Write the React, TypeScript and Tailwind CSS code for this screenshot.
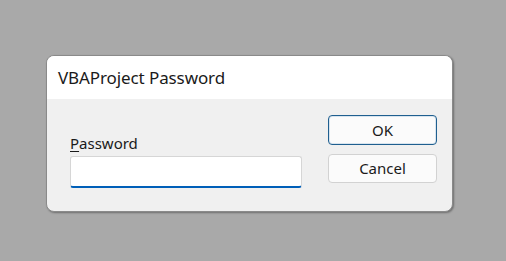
export default function App() {
  return (
    <div
      className="w-[506px] h-[261px] bg-[#a9a9a9] pt-[55px] pl-[46px]"
      style={{ fontFamily: '"Noto Sans", "Open Sans", sans-serif' }}
    >
      <div className="w-[407px] h-[157px] rounded-[8px] border border-[#8a8a8a] bg-[#f0f0f0] overflow-hidden shadow-[1px_1px_2px_rgba(0,0,0,0.35)] flex flex-col">
        {/* Title bar */}
        <div className="h-[43px] bg-white flex items-center pl-[11px] text-[17px] text-[#1a1a1a] tracking-[-0.1px]">
          VBAProject Password
        </div>

        {/* Body */}
        <div className="flex flex-1 pl-[23px] pr-[15px] pt-[16px]">
          <div className="flex-1 flex flex-col pt-[18px]">
            <label className="text-[15px] text-[#1a1a1a] leading-[20px]">
              <span className="underline underline-offset-[2px]">P</span>assword
            </label>
            <div className="mt-[3px] w-[232px] h-[32px] bg-white border border-[#d6d6d6] border-b-2 border-b-[#005fb8] rounded-[3px]" />
          </div>
          <div className="flex flex-col gap-[9px] w-[109px]">
            <button className="h-[30px] rounded-[4px] border border-[#1f5f8f] bg-[#fbfbfb] text-[15px] text-[#1a1a1a] shadow-[inset_0_0_0_1px_#d8e4ee]">
              OK
            </button>
            <button className="h-[29px] rounded-[4px] border border-[#d2d2d2] bg-[#fbfbfb] text-[15px] text-[#1a1a1a]">
              Cancel
            </button>
          </div>
        </div>
      </div>
    </div>
  );
}
